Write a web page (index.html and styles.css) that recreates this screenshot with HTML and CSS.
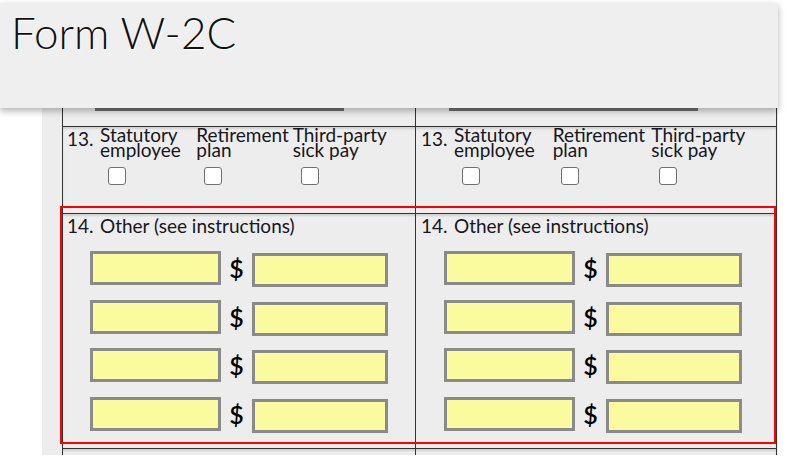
FILE: index.html
```html
<!DOCTYPE html>
<html lang="en">
  <head>
    <meta charset="UTF-8" />
    <meta name="viewport" content="width=device-width, initial-scale=1.0" />
    <title>Form W-2C</title>
    <link rel="stylesheet" href="styles.css">
  </head>
  <body>
    <header class="title-bar">
      <h1>Form W-2C</h1>
    </header>

    <div class="sheet">
      <div class="form">

        <div class="row row-12">
          <div class="cell"><input type="text" class="wide-input"></div>
          <div class="cell"><input type="text" class="wide-input"></div>
        </div>

        <div class="row row-13">
          <div class="cell box13">
            <span class="num">13.</span>
            <div class="checks">
              <label class="check"><span>Statutory<br>employee</span><input type="checkbox"></label>
              <label class="check"><span>Retirement<br>plan</span><input type="checkbox"></label>
              <label class="check"><span>Third-party<br>sick pay</span><input type="checkbox"></label>
            </div>
          </div>
          <div class="cell box13">
            <span class="num">13.</span>
            <div class="checks">
              <label class="check"><span>Statutory<br>employee</span><input type="checkbox"></label>
              <label class="check"><span>Retirement<br>plan</span><input type="checkbox"></label>
              <label class="check"><span>Third-party<br>sick pay</span><input type="checkbox"></label>
            </div>
          </div>
        </div>

        <div class="row row-14">
          <div class="highlight"></div>
          <div class="cell">
            <div class="box-title"><span class="num">14.</span>Other (see instructions)</div>
            <div class="other-list" id="otherLeft"></div>
          </div>
          <div class="cell">
            <div class="box-title"><span class="num">14.</span>Other (see instructions)</div>
            <div class="other-list" id="otherRight"></div>
          </div>
        </div>

        <div class="row row-15">
          <div class="cell"></div>
          <div class="cell"></div>
        </div>

      </div>
    </div>

    <script>
      // four code / amount pairs per box 14
      ['otherLeft', 'otherRight'].forEach(id => {
        const list = document.getElementById(id);
        for (let i = 0; i < 4; i++) {
          const line = document.createElement('div');
          line.classList.add('other-line');
          line.innerHTML = '<input type="text" class="code"><span class="dollar">$</span><input type="text" class="amount">';
          list.appendChild(line);
        }
      });
    </script>
  </body>
</html>
```

FILE: styles.css
```css
body {
  margin: 0;
  padding: 3px 0 0 0;
  background-color: #fff;
  font-family: Lato, "Open Sans", sans-serif;
  color: #161620;
  width: 788px;
  height: 461px;
  box-sizing: border-box;
  overflow: hidden;
  position: relative;
}

.title-bar {
  position: absolute;
  top: 3px;
  left: 0;
  width: 778px;
  height: 105px;
  background: #efefef;
  box-shadow: 0 3px 7px rgba(0, 0, 0, 0.3);
  z-index: 10;
}

.title-bar h1 {
  margin: 0;
  padding: 3px 0 0 11px;
  font-family: Lato, sans-serif;
  font-weight: 300;
  font-size: 44px;
  color: #111;
  text-shadow: 1px 1px 1px #fff;
}

.sheet {
  margin-left: 42px;
  width: 736px;
  height: 452px;
  background: #ededed;
  overflow: hidden;
}

.form {
  margin: 37px 0 0 20px;
  width: 715px;
  border-left: 1px solid #333;
  border-right: 1px solid #333;
  box-sizing: border-box;
}

.row {
  display: grid;
  grid-template-columns: 352px 1fr;
  box-sizing: border-box;
}

.row + .row {
  border-top: 1px solid #333;
  box-shadow: inset 0 2px 2px rgba(0, 0, 0, 0.12);
}

.cell {
  box-sizing: border-box;
  padding-left: 4px;
}

.cell + .cell {
  border-left: 1px solid #333;
  padding-left: 5px;
}

.num {
  display: inline-block;
  width: 33px;
  font-size: 19px;
}

.row-12 {
  height: 86px;
}

.wide-input {
  display: block;
  margin: 37px 0 0 28px;
  width: 249px;
  height: 34px;
  box-sizing: border-box;
  border: 3px solid #707070;
  background: #fafa9e;
}

.row-13 {
  height: 87px;
}

.box13 {
  display: flex;
  align-items: flex-start;
}

.box13 .num {
  padding-top: 4px;
  line-height: 15px;
}

.checks {
  flex: 1;
  display: grid;
  grid-template-columns: 1fr 1fr 1fr;
  padding-right: 26px;
}

.check {
  display: flex;
  flex-direction: column;
  align-items: flex-start;
  font-size: 19px;
  line-height: 15px;
  white-space: nowrap;
}

.check input {
  appearance: none;
  -webkit-appearance: none;
  margin: 10px 0 0 8px;
  width: 18px;
  height: 18px;
  border: 1px solid #707070;
  border-radius: 3px;
  background: #fff;
}

.row-14 {
  position: relative;
  height: 235px;
}

.box-title {
  padding-top: 2px;
  font-size: 19px;
  line-height: 20px;
}

.other-list {
  display: flex;
  flex-direction: column;
  gap: 12.5px;
  margin: 15px 0 0 23px;
}

.other-line {
  display: flex;
  align-items: flex-start;
}

.other-line input {
  height: 34px;
  box-sizing: border-box;
  border: 3px solid #8a8a8a;
  background: #fafa9e;
  margin: 0;
}

.other-line .code {
  width: 131px;
}

.other-line .amount {
  width: 136px;
  margin-top: 2px;
}

.dollar {
  width: 31px;
  text-align: center;
  font-size: 25px;
  font-weight: 600;
  line-height: 34px;
  color: #000;
}

.highlight {
  position: absolute;
  left: -3px;
  top: -8px;
  width: 716px;
  height: 238px;
  box-sizing: border-box;
  border: 2px solid #f00;
  pointer-events: none;
}

.row-15 {
  height: 20px;
}
```
